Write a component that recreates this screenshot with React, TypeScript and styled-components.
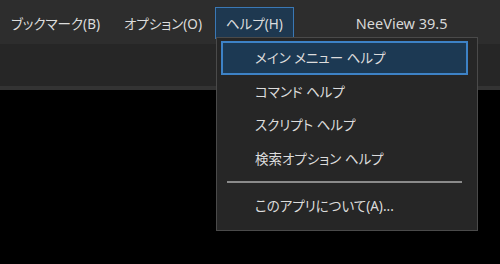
import React from "react";
import styled, { createGlobalStyle } from "styled-components";

const Global = createGlobalStyle`
  html, body { margin: 0; padding: 0; background: #000; }
  body {
    width: 500px; height: 264px; overflow: hidden;
    font-family: "Noto Sans", "Noto Sans CJK JP", sans-serif;
    font-feature-settings: "palt";
  }
`;

const Window = styled.div`
  position: relative;
  width: 500px;
  height: 264px;
  display: flex;
  flex-direction: column;
  background: #000;
`;

const MenuBar = styled.div`
  height: 44px;
  background: #2d2d2d;
  display: flex;
  align-items: center;
`;

const MenuItem = styled.div<{ $active?: boolean }>`
  height: 32px;
  box-sizing: border-box;
  display: flex;
  align-items: center;
  padding: 0 10px;
  margin-right: 2px;
  margin-top: 1px;
  color: #dcdcdc;
  font-size: 13.5px;
  border: 1px solid ${(p) => (p.$active ? "#3a78b5" : "transparent")};
  background: ${(p) => (p.$active ? "#1e3850" : "transparent")};
`;

const Title = styled.div`
  margin-left: 60px;
  margin-top: 1px;
  color: #d8d8d8;
  font-size: 14.5px;
`;

const Toolbar = styled.div`
  height: 42px;
  background: #262626;
`;

const Strip = styled.div`
  height: 4px;
  background: #333;
`;

const Main = styled.div`
  flex: 1;
  background: #000;
`;

const Dropdown = styled.div`
  position: absolute;
  left: 216px;
  top: 37px;
  width: 262px;
  box-sizing: border-box;
  background: #262626;
  border: 1px solid #4a4a4a;
  padding: 3px 9px 7px 4px;
  display: flex;
  flex-direction: column;
`;

const Item = styled.div<{ $hl?: boolean }>`
  height: 33.5px;
  box-sizing: border-box;
  display: flex;
  align-items: center;
  padding-left: 32px;
  padding-bottom: 1px;
  color: #dcdcdc;
  font-size: 13.5px;
  border: 2px solid ${(p) => (p.$hl ? "#3d82c6" : "transparent")};
  background: ${(p) => (p.$hl ? "#1c3953" : "transparent")};
`;

const Separator = styled.div`
  height: 2px;
  background: #8a8a8a;
  margin: 6px 6px;
`;

export default function App() {
  return (
    <>
      <Global />
      <Window>
        <MenuBar>
          <MenuItem>ブックマーク(B)</MenuItem>
          <MenuItem>オプション(O)</MenuItem>
          <MenuItem $active>ヘルプ(H)</MenuItem>
          <Title>NeeView 39.5</Title>
        </MenuBar>
        <Toolbar />
        <Strip />
        <Main />
        <Dropdown>
          <Item $hl>メイン メニュー ヘルプ</Item>
          <Item>コマンド ヘルプ</Item>
          <Item>スクリプト ヘルプ</Item>
          <Item>検索オプション ヘルプ</Item>
          <Separator />
          <Item>このアプリについて(A)...</Item>
        </Dropdown>
      </Window>
    </>
  );
}
